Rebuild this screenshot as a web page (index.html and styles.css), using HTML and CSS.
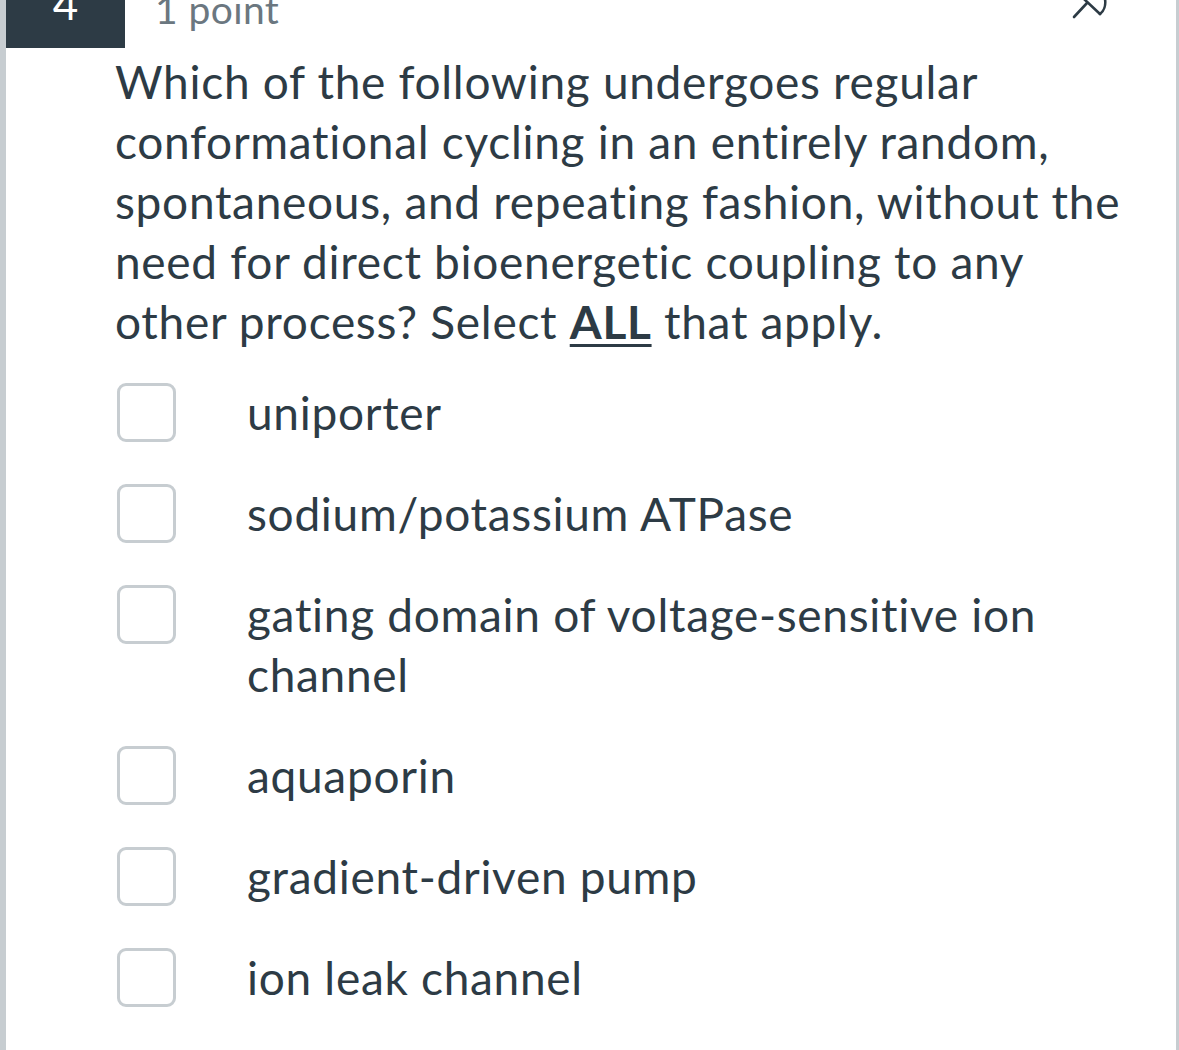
FILE: index.html
```html
<!DOCTYPE html>
<html lang="en">
<head>
<meta charset="utf-8">
<title>Question 4</title>
<link rel="stylesheet" href="styles.css">
</head>
<body>
<div class="card">
  <div class="header">
    <div class="qnum"><span>4</span></div>
    <div class="points">1 point</div>
    <svg class="pin" width="40" height="24" viewBox="0 0 40 24" aria-hidden="true">
      <path d="M4 17 L17 3" />
      <path d="M14 -1 L30 14" />
      <path d="M30 14 C34 11 36 5 35 -1" />
    </svg>
  </div>
  <div class="question">
    <p class="prompt">Which of the following undergoes regular conformational cycling in an entirely random, spontaneous, and repeating fashion, without the need for direct bioenergetic coupling to any other process? Select <b class="all">ALL</b> that apply.</p>
    <ul class="options">
      <li class="option"><span class="box"></span><span class="label">uniporter</span></li>
      <li class="option"><span class="box"></span><span class="label">sodium/potassium ATPase</span></li>
      <li class="option"><span class="box"></span><span class="label">gating domain of voltage-sensitive ion channel</span></li>
      <li class="option"><span class="box"></span><span class="label">aquaporin</span></li>
      <li class="option"><span class="box"></span><span class="label">gradient-driven pump</span></li>
      <li class="option"><span class="box"></span><span class="label">ion leak channel</span></li>
    </ul>
  </div>
</div>
</body>
</html>
```
FILE: styles.css
```css
html, body {
  margin: 0;
  padding: 0;
  background: #ffffff;
}
body {
  font-family: Lato, "Open Sans", sans-serif;
  color: #2d3b45;
  font-variant-ligatures: none;
}
.card {
  box-sizing: border-box;
  width: 1179px;
  height: 1050px;
  overflow: hidden;
  border-left: 6px solid #c7cdd1;
  border-right: 3px solid #c7cdd1;
}
.header {
  display: flex;
  align-items: flex-start;
  height: 48px;
  overflow: hidden;
}
.qnum {
  width: 119px;
  height: 48px;
  background: #2d3b45;
  color: #ffffff;
  display: flex;
  justify-content: center;
  flex: none;
}
.qnum span {
  font-size: 44px;
  line-height: 44px;
  margin-top: -19px;
}
.points {
  margin-left: 30px;
  font-size: 39px;
  line-height: 39px;
  margin-top: -10px;
  letter-spacing: 0.4px;
  color: #6b7780;
}
.pin {
  margin-left: auto;
  margin-right: 66px;
  fill: none;
  stroke: #2d3b45;
  stroke-width: 2.6;
  stroke-linecap: round;
}
.question {
  padding: 4px 50px 0 109px;
}
.prompt {
  margin: 0;
  font-size: 46px;
  letter-spacing: 0.7px;
  line-height: 60px;
}
.all {
  font-weight: 700;
  text-decoration: underline;
  text-underline-offset: 5px;
  text-decoration-thickness: 3px;
}
.options {
  list-style: none;
  margin: 31px 0 0 0;
  padding: 0;
  display: flex;
  flex-direction: column;
  gap: 41px;
}
.option {
  display: flex;
  align-items: flex-start;
  font-size: 46px;
  letter-spacing: 0.7px;
  line-height: 60px;
}
.box {
  box-sizing: border-box;
  flex: none;
  width: 59px;
  height: 59px;
  margin-left: 2px;
  border: 3px solid #c7cdd1;
  border-radius: 9px;
}
.label {
  margin-left: 71px;
  max-width: 880px;
}
```
